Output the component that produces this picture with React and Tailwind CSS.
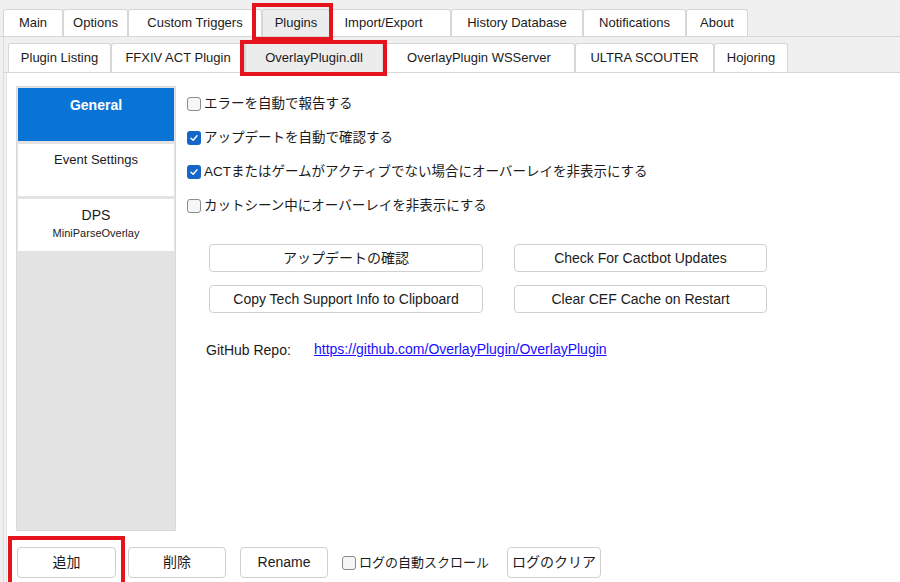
import React from "react";

const FONT = { fontFamily: '"Liberation Sans", "Noto Sans CJK JP", sans-serif' };

const topTabs = [
  { label: "Main", w: "w-[60px]" },
  { label: "Options", w: "w-[65px]" },
  { label: "Custom Triggers", w: "w-[134px]" },
  { label: "Plugins", w: "w-[68px]", active: true },
  { label: "Import/Export", w: "w-[121px]", pr: "pr-[14px]" },
  { label: "History Database", w: "w-[132px]" },
  { label: "Notifications", w: "w-[103px]" },
  { label: "About", w: "w-[62px]" },
];

const subTabs = [
  { label: "Plugin Listing", w: "w-[103px]" },
  { label: "FFXIV ACT Plugin", w: "w-[134px]" },
  { label: "OverlayPlugin.dll", w: "w-[138px]", active: true },
  { label: "OverlayPlugin WSServer", w: "w-[192px]" },
  { label: "ULTRA SCOUTER", w: "w-[139px]" },
  { label: "Hojoring", w: "w-[74px]" },
];

const options = [
  { label: "エラーを自動で報告する", checked: false },
  { label: "アップデートを自動で確認する", checked: true },
  { label: "ACTまたはゲームがアクティブでない場合にオーバーレイを非表示にする", checked: true },
  { label: "カットシーン中にオーバーレイを非表示にする", checked: false },
];

function Tab({ label, w, active, pr = "" }) {
  return (
    <div
      className={`${w} ${pr} h-full flex items-center justify-center border border-b-0 border-[#d6d6d6] rounded-t-[3px] text-[13px] text-[#1b1b1b] ${
        active ? "bg-[#ececec]" : "bg-white"
      }`}
    >
      {label}
    </div>
  );
}

function CheckBox({ checked }) {
  return checked ? (
    <span className="w-[14px] h-[14px] rounded-[3px] bg-[#1467c8] grid place-items-center shrink-0">
      <svg width="10" height="10" viewBox="0 0 10 10">
        <path d="M2 5.2 L4.2 7.3 L8 2.8" fill="none" stroke="white" strokeWidth="1.4" strokeLinecap="round" strokeLinejoin="round" />
      </svg>
    </span>
  ) : (
    <span className="w-[14px] h-[14px] rounded-[3px] border border-[#8c8c8c] bg-[#f6f6f6] shrink-0" />
  );
}

function Button({ children, className = "" }) {
  return (
    <div
      className={`flex items-center justify-center bg-white border border-[#d0d0d0] rounded-[4px] text-[14px] text-[#1b1b1b] ${className}`}
    >
      {children}
    </div>
  );
}

function RedBox({ className }) {
  return <div className={`absolute border-[4px] border-[#e5141c] pointer-events-none ${className}`} />;
}

export default function App() {
  return (
    <div className="relative w-[900px] h-[582px] overflow-hidden bg-white flex flex-col" style={FONT}>
      {/* top tab strip */}
      <div className="h-[37px] bg-[#f0f0f0] flex items-end pl-[3px] border-b border-[#d6d6d6] shrink-0">
        <div className="flex h-[27px]">
          {topTabs.map((t) => (
            <Tab key={t.label} {...t} />
          ))}
        </div>
      </div>

      <div className="flex-1 flex bg-[#f0f0f0] pl-[3px]">
        <div className="flex-1 flex flex-col border-l border-[#dcdcdc]">
          {/* sub tab strip */}
          <div className="h-[36px] flex items-end pl-[4px] border-b border-[#d6d6d6] shrink-0">
            <div className="flex h-[29px]">
              {subTabs.map((t) => (
                <Tab key={t.label} {...t} />
              ))}
            </div>
          </div>

          <div className="flex-1 flex bg-[#f3f3f3]">
            <div className="w-[3px] border-r border-[#e2e2e2]" />
            <div className="flex-1 bg-white flex flex-col">
              <div className="flex h-[458px]">
                {/* sidebar */}
                <div className="ml-[9px] mt-[13px] w-[160px] h-[445px] bg-[#e3e3e3] border border-[#dadada] p-[1px] flex flex-col gap-[3px]">
                  <div className="h-[53px] bg-[#0a74d6] text-white font-bold text-[14px] text-center pt-[7px]">General</div>
                  <div className="h-[52px] bg-white text-[13px] text-center pt-[6px] text-[#1b1b1b]">Event Settings</div>
                  <div className="h-[52px] bg-white text-center pt-[7px] text-[#1b1b1b] flex flex-col items-center">
                    <span className="text-[14px] leading-[18px]">DPS</span>
                    <span className="text-[11px] leading-[18px]">MiniParseOverlay</span>
                  </div>
                </div>

                {/* content */}
                <div className="ml-[11px] mt-[14px] flex-1 flex flex-col">
                  {options.map((o) => (
                    <div key={o.label} className="h-[34px] flex items-center gap-[3px]">
                      <CheckBox checked={o.checked} />
                      <span className="text-[13.5px] text-[#1b1b1b]">{o.label}</span>
                    </div>
                  ))}

                  <div className="ml-[22px] mt-[21px] grid grid-cols-[274px_253px] gap-x-[31px] gap-y-[13px] w-max">
                    <Button className="h-[28px]">アップデートの確認</Button>
                    <Button className="h-[28px]">Check For Cactbot Updates</Button>
                    <Button className="h-[28px]">Copy Tech Support Info to Clipboard</Button>
                    <Button className="h-[28px]">Clear CEF Cache on Restart</Button>
                  </div>

                  <div className="ml-[19px] mt-[24px] flex items-center text-[14px]">
                    <span className="w-[108px] text-[#1b1b1b] pt-[3px]">GitHub Repo:</span>
                    <span className="text-[#1a0dff] underline">https://github.com/OverlayPlugin/OverlayPlugin</span>
                  </div>
                </div>
              </div>

              {/* bottom bar */}
              <div className="mt-[16px] ml-[10px] flex items-center h-[31px]">
                <Button className="w-[99px] h-[31px] border-[#5a9ad8]">追加</Button>
                <Button className="w-[98px] h-[31px] ml-[12px]">削除</Button>
                <Button className="w-[88px] h-[31px] ml-[14px]">Rename</Button>
                <div className="ml-[14px] flex items-center gap-[3px]">
                  <CheckBox checked={false} />
                  <span className="text-[13px] text-[#1b1b1b]">ログの自動スクロール</span>
                </div>
                <Button className="w-[94px] h-[31px] ml-[18px]">ログのクリア</Button>
              </div>
            </div>
          </div>
        </div>
      </div>

      <RedBox className="left-[252px] top-[3px] w-[81px] h-[38px]" />
      <RedBox className="left-[240px] top-[40px] w-[147px] h-[36px]" />
      <RedBox className="left-[8px] top-[536px] w-[117px] h-[50px]" />
    </div>
  );
}
